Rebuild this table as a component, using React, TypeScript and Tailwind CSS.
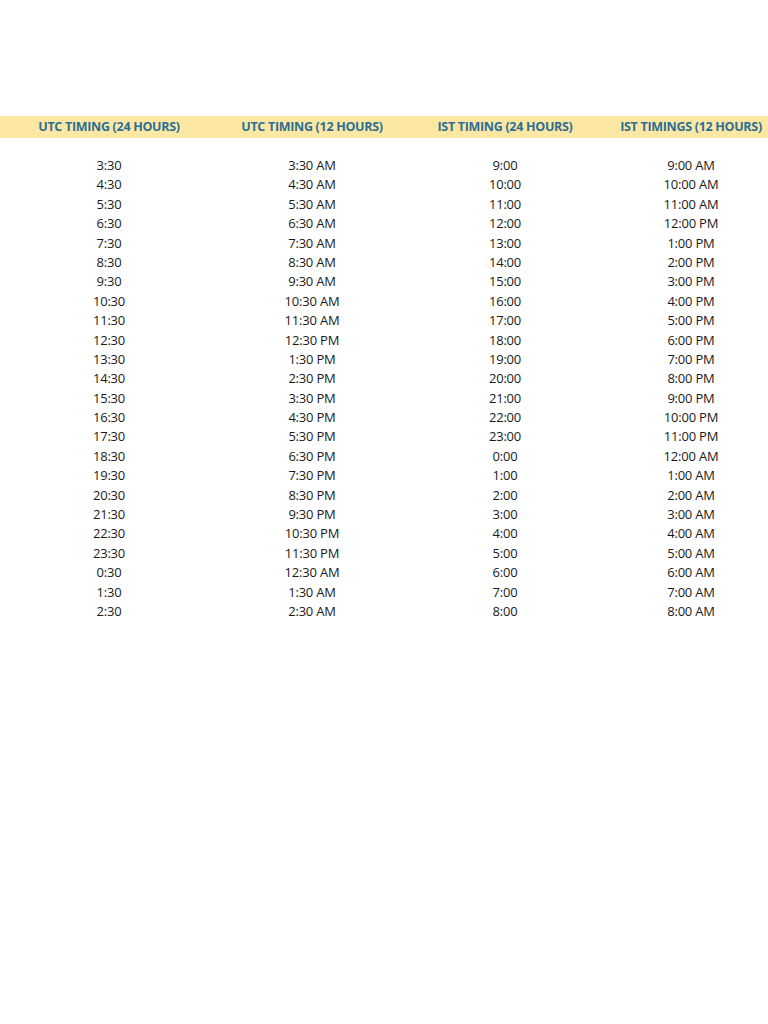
const headers = [
  "UTC TIMING (24 HOURS)",
  "UTC TIMING (12 HOURS)",
  "IST TIMING (24 HOURS)",
  "IST TIMINGS (12 HOURS)",
];

const rows: string[][] = [
  ["3:30", "3:30 AM", "9:00", "9:00 AM"],
  ["4:30", "4:30 AM", "10:00", "10:00 AM"],
  ["5:30", "5:30 AM", "11:00", "11:00 AM"],
  ["6:30", "6:30 AM", "12:00", "12:00 PM"],
  ["7:30", "7:30 AM", "13:00", "1:00 PM"],
  ["8:30", "8:30 AM", "14:00", "2:00 PM"],
  ["9:30", "9:30 AM", "15:00", "3:00 PM"],
  ["10:30", "10:30 AM", "16:00", "4:00 PM"],
  ["11:30", "11:30 AM", "17:00", "5:00 PM"],
  ["12:30", "12:30 PM", "18:00", "6:00 PM"],
  ["13:30", "1:30 PM", "19:00", "7:00 PM"],
  ["14:30", "2:30 PM", "20:00", "8:00 PM"],
  ["15:30", "3:30 PM", "21:00", "9:00 PM"],
  ["16:30", "4:30 PM", "22:00", "10:00 PM"],
  ["17:30", "5:30 PM", "23:00", "11:00 PM"],
  ["18:30", "6:30 PM", "0:00", "12:00 AM"],
  ["19:30", "7:30 PM", "1:00", "1:00 AM"],
  ["20:30", "8:30 PM", "2:00", "2:00 AM"],
  ["21:30", "9:30 PM", "3:00", "3:00 AM"],
  ["22:30", "10:30 PM", "4:00", "4:00 AM"],
  ["23:30", "11:30 PM", "5:00", "5:00 AM"],
  ["0:30", "12:30 AM", "6:00", "6:00 AM"],
  ["1:30", "1:30 AM", "7:00", "7:00 AM"],
  ["2:30", "2:30 AM", "8:00", "8:00 AM"],
];

const cols = "grid grid-cols-[218px_188px_198px_164px]";

export default function App() {
  return (
    <div className="w-[768px] h-[1024px] bg-white font-['Open_Sans',sans-serif] overflow-hidden">
      <div className="pt-[116px]">
        {/* header band */}
        <div className={`${cols} h-[22px] items-center bg-[#fde8a3] text-[#2d6e96] text-[12.5px] font-bold tracking-[-0.3px]`}>
          {headers.map((h, i) => (
            <div key={h} className={`text-center ${i === 3 ? "pl-[10px]" : ""}`}>
              {h}
            </div>
          ))}
        </div>

        {/* times */}
        <div className="mt-[18px] text-[13px] text-[#1a1a1a] tracking-[-0.2px]">
          {rows.map((r, ri) => (
            <div key={ri} className={`${cols} h-[19.4px] items-center`}>
              {r.map((c, ci) => (
                <div key={ci} className={`text-center ${ci === 3 ? "pl-[10px]" : ""}`}>
                  {c}
                </div>
              ))}
            </div>
          ))}
        </div>
      </div>
    </div>
  );
}
